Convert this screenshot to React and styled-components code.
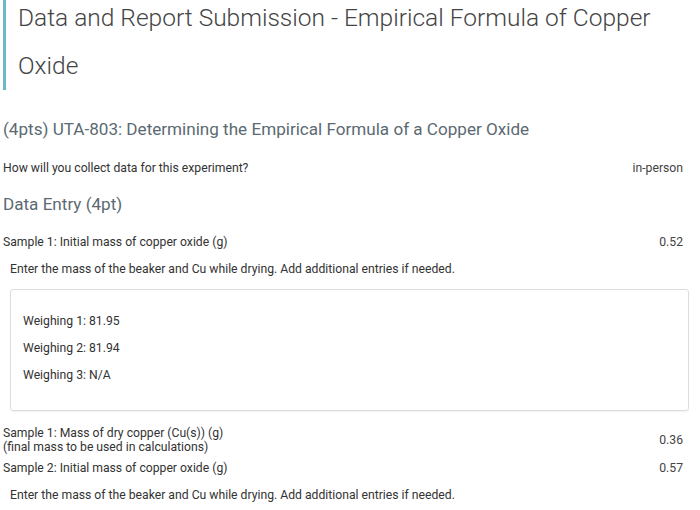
import React from 'react';
import styled, { createGlobalStyle } from 'styled-components';

const GlobalStyle = createGlobalStyle`
  html, body {
    margin: 0;
    padding: 0;
    background: #fff;
  }
  body {
    font-family: Roboto, "Liberation Sans", sans-serif;
    color: #333;
    overflow: hidden;
  }
`;

const Page = styled.div`
  width: 700px;
  height: 510px;
  overflow: hidden;
  padding: 0 11px 0 3px;
  box-sizing: border-box;
`;

const TitleBar = styled.div`
  border-left: 3px solid #6db8c6;
  padding-left: 12px;
  margin-top: -6px;
`;

const Title = styled.h1`
  margin: 0;
  font-size: 24.5px;
  font-weight: 300;
  line-height: 48px;
  color: #444;
`;

const Heading = styled.h2`
  margin: ${p => p.$top || 0}px 0 0;
  font-size: 17.1px;
  font-weight: 400;
  line-height: 24px;
  color: #5b6a72;
`;

const Row = styled.div`
  display: flex;
  justify-content: space-between;
  align-items: center;
  margin-top: ${p => p.$top || 0}px;
  font-size: 12.2px;
  line-height: 14px;
  color: #333;
`;

const Label = styled.div`
  display: flex;
  flex-direction: column;
`;

const Value = styled.span`
  padding-right: 6px;
  color: #444;
`;

const Note = styled.p`
  margin: ${p => p.$top || 0}px 0 0 7px;
  font-size: 12.2px;
  line-height: 14px;
  color: #333;
`;

const EntryBox = styled.div`
  margin: 13px 0 0 7px;
  height: 122px;
  box-sizing: border-box;
  border: 1px solid #ddd;
  border-radius: 3px;
  box-shadow: 0 1px 2px rgba(0, 0, 0, 0.06);
  padding: 24px 12px 0;
  display: flex;
  flex-direction: column;
  gap: 13px;
`;

const Entry = styled.div`
  font-size: 12.2px;
  line-height: 14px;
  color: #333;
`;

const App = () => (
  <>
    <GlobalStyle />
    <Page>
      <TitleBar>
        <Title>
          Data and Report Submission - Empirical Formula of Copper Oxide
        </Title>
      </TitleBar>

      <Heading $top={27}>
        (4pts) UTA-803: Determining the Empirical Formula of a Copper Oxide
      </Heading>
      <Row $top={20}>
        <span>How will you collect data for this experiment?</span>
        <Value>in-person</Value>
      </Row>

      <Heading $top={17}>Data Entry (4pt)</Heading>
      <Row $top={19}>
        <span>Sample 1: Initial mass of copper oxide (g)</span>
        <Value>0.52</Value>
      </Row>
      <Note $top={13}>
        Enter the mass of the beaker and Cu while drying. Add additional entries if needed.
      </Note>

      <EntryBox>
        <Entry>Weighing 1: 81.95</Entry>
        <Entry>Weighing 2: 81.94</Entry>
        <Entry>Weighing 3: N/A</Entry>
      </EntryBox>

      <Row $top={15}>
        <Label>
          <span>Sample 1: Mass of dry copper (Cu(s)) (g)</span>
          <span>(final mass to be used in calculations)</span>
        </Label>
        <Value>0.36</Value>
      </Row>
      <Row $top={7}>
        <span>Sample 2: Initial mass of copper oxide (g)</span>
        <Value>0.57</Value>
      </Row>
      <Note $top={13}>
        Enter the mass of the beaker and Cu while drying. Add additional entries if needed.
      </Note>
    </Page>
  </>
);

export default App;
